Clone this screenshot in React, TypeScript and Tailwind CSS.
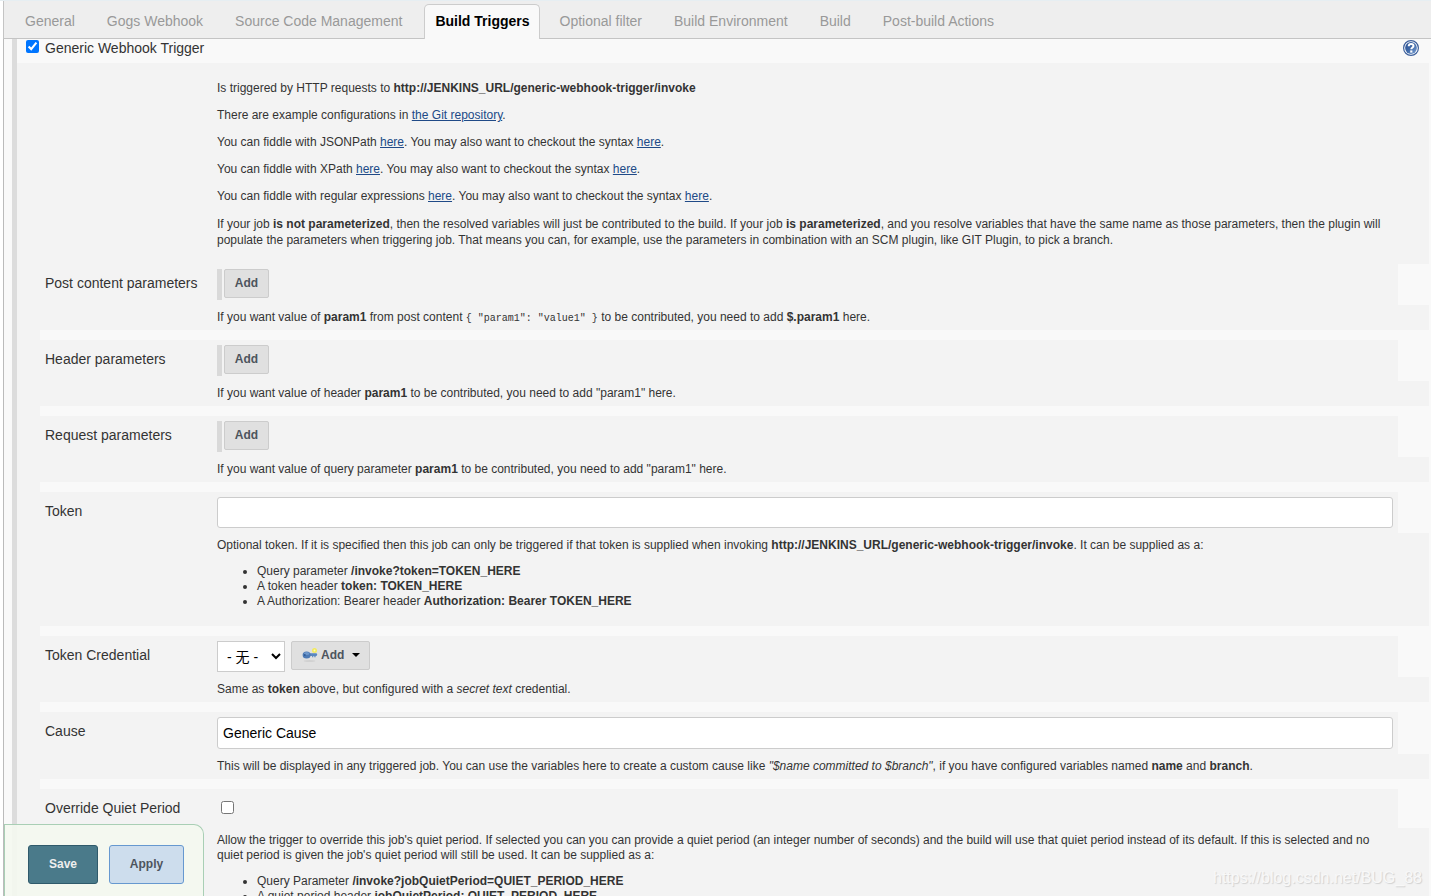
import React from 'react'

const tabs = [
  'General',
  'Gogs Webhook',
  'Source Code Management',
  'Build Triggers',
  'Optional filter',
  'Build Environment',
  'Build',
  'Post-build Actions'
]

const HelpIcon: React.FC = () => (
  <svg width="16" height="16" viewBox="0 0 16 16" aria-hidden="true">
    <defs>
      <linearGradient id="help-fill" x1="0" y1="0" x2="1" y2="1">
        <stop offset="0" stopColor="#2a5092" />
        <stop offset="0.5" stopColor="#3f69a8" />
        <stop offset="1" stopColor="#7ea3d6" />
      </linearGradient>
    </defs>
    <circle cx="8" cy="8" r="7.4" fill="#fff" stroke="#3c5f9b" strokeWidth="1.2" />
    <circle cx="8" cy="8" r="5.9" fill="url(#help-fill)" />
    <path d="M5.7 6.3C5.7 4.7 6.600 3.900 8.100 3.900s2.400.8 2.400 2c0 1.500-2.200 1.600-2.200 3.400" fill="none" stroke="#fff" strokeWidth="2" />
    <rect x="7.200" y="10.400" width="2.200" height="2.200" fill="#fff" />
  </svg>
)

const KeyIcon: React.FC = () => (
  <svg width="16" height="16" viewBox="0 0 16 16" aria-hidden="true">
    <ellipse cx="7.500" cy="14" rx="6" ry="0.8" fill="#cbcbcb" />
    <path d="M7 6.300h7.500l.8 1.200-.8 1.400h-.9v1.300h-1.300V8.900h-1v1.300h-1.200V8.900H7z" fill="#5b87bf" />
    <ellipse cx="4.600" cy="7.900" rx="4" ry="3.500" fill="#4d7ab5" />
    <ellipse cx="4.600" cy="6.500" rx="2.700" ry="1.500" fill="#6f98cb" />
    <circle cx="2.800" cy="8" r="0.9" fill="#2f5791" />
    <circle cx="12.500" cy="3.500" r="2.500" fill="#f3ea5c" />
    <circle cx="12.500" cy="3.500" r="1" fill="#fdf9bb" />
  </svg>
)

interface RowProps {
  label: string
  htmlFor?: string
  control: React.ReactNode
  children: React.ReactNode
}

const Row: React.FC<RowProps> = ({ label, htmlFor, control, children }) => (
  <div className="ml-[23px] border-b-10 border-[#f9f9f9]">
    <div className="flex">
      <div className="flex min-w-0 flex-1 items-start py-[5px] pr-[5px] pl-[5px]">
        <label htmlFor={htmlFor} className="w-[172px] shrink-0 pt-1 text-sm leading-5">
          {label}
        </label>
        {control}
      </div>
      <div className="w-[31px] shrink-0 bg-[#f9f9f9]" />
    </div>
    <div className="pt-[5px] pr-[36px] pb-[5px] pl-[177px] text-xs leading-[15px]">{children}</div>
  </div>
)

const AddButton: React.FC<{ id: string }> = ({ id }) => (
  <div className="flex h-[31px] items-start border-l-5 border-[#d9d9d9] pl-[2px]">
    <button
      id={id}
      type="button"
      className="h-[29px] w-[45px] rounded-xs border border-[#ccc] bg-[#e0e0e0] pb-[2px] text-xs font-bold text-[#4d545d]"
    >
      Add
    </button>
  </div>
)

const DocLink: React.FC<{ children: React.ReactNode }> = ({ children }) => (
  <a href="#" className="text-[#204a87] underline">
    {children}
  </a>
)

export default function App() {
  return (
    <div className="relative flex h-screen flex-col overflow-hidden border-t border-[#e6eef2] bg-white pl-[3px] font-['Liberation_Sans',Arial,'Noto_Sans_CJK_SC',sans-serif] text-[#333]">
      {/* Section tabs */}
      <nav className="flex h-[38px] shrink-0 items-end border-b border-l border-[#c4c4c4] bg-[#eee] pl-[11px]">
        {tabs.map((tab) => (
          <a
            key={tab}
            href="#"
            className={
              tab === 'Build Triggers'
                ? '-mb-px mr-[10px] h-[35px] rounded-t-[5px] border border-b-0 border-[#ccc] bg-[#f9f9f9] pt-[6px] pr-[9px] pl-[10px] text-sm leading-5 font-bold whitespace-nowrap text-black'
                : 'mr-3 h-[34px] px-[10px] pt-[7px] text-sm leading-5 whitespace-nowrap text-[#999]'
            }
          >
            {tab}
          </a>
        ))}
      </nav>

      <main className="min-h-0 flex-1 overflow-hidden border-l border-[#bbb] bg-[#f9f9f9] pl-2">
        <div className="border-l-5 border-[#dcdcdc] pr-[2px]">
          <div className="flex h-6 items-start justify-between pr-[10px] pl-[9px]">
            <div className="flex items-start">
              <input id="webhook" type="checkbox" defaultChecked className="mt-px size-[13px]" />
              <label htmlFor="webhook" className="ml-[6px] text-sm leading-[18px]">
                Generic Webhook Trigger
              </label>
            </div>
            <button type="button" aria-label="Help" className="mt-px">
              <HelpIcon />
            </button>
          </div>

          <div className="bg-[#f3f3f3]">
            {/* Plugin description */}
            <div className="space-y-3 pt-[18px] pr-[36px] pb-4 pl-[200px] text-xs leading-[15px]">
              <p>
                Is triggered by HTTP requests to <b>http://JENKINS_URL/generic-webhook-trigger/invoke</b>
              </p>
              <p>
                There are example configurations in <DocLink>the Git repository</DocLink>.
              </p>
              <p>
                You can fiddle with JSONPath <DocLink>here</DocLink>. You may also want to checkout the syntax <DocLink>here</DocLink>.
              </p>
              <p>
                You can fiddle with XPath <DocLink>here</DocLink>. You may also want to checkout the syntax <DocLink>here</DocLink>.
              </p>
              <p>
                You can fiddle with regular expressions <DocLink>here</DocLink>. You may also want to checkout the syntax <DocLink>here</DocLink>.
              </p>
              <p className="leading-4">
                If your job <b>is not parameterized</b>, then the resolved variables will just be contributed to the build. If your job <b>is parameterized</b>, and you resolve variables that have the same name as those parameters, then the plugin will populate the parameters when triggering job. That means you can, for example, use the parameters in combination with an SCM plugin, like GIT Plugin, to pick a branch.
              </p>
            </div>

            <Row label="Post content parameters" htmlFor="add-post" control={<AddButton id="add-post" />}>
              <p>
                If you want value of <b>param1</b> from post content{' '}
                <code className="font-['Liberation_Mono',monospace] text-[10px] leading-none">{'{ "param1": "value1" }'}</code> to be contributed, you need to add <b>$.param1</b> here.
              </p>
            </Row>

            <Row label="Header parameters" htmlFor="add-header" control={<AddButton id="add-header" />}>
              <p>
                If you want value of header <b>param1</b> to be contributed, you need to add "param1" here.
              </p>
            </Row>

            <Row label="Request parameters" htmlFor="add-request" control={<AddButton id="add-request" />}>
              <p>
                If you want value of query parameter <b>param1</b> to be contributed, you need to add "param1" here.
              </p>
            </Row>

            <Row
              label="Token"
              htmlFor="token"
              control={<input id="token" type="text" className="h-[31px] min-w-0 flex-1 rounded-[3px] border border-[#ccc] bg-white px-[5px] text-sm text-black" />}
            >
              <p>
                Optional token. If it is specified then this job can only be triggered if that token is supplied when invoking <b>http://JENKINS_URL/generic-webhook-trigger/invoke</b>. It can be supplied as a:
              </p>
              <ul className="list-disc pt-[11px] pb-3 pl-10">
                <li>Query parameter <b>/invoke?token=TOKEN_HERE</b></li>
                <li>A token header <b>token: TOKEN_HERE</b></li>
                <li>A Authorization: Bearer header <b>Authorization: Bearer TOKEN_HERE</b></li>
              </ul>
            </Row>

            <Row
              label="Token Credential"
              htmlFor="credential"
              control={
                <div className="flex h-[31px] items-start gap-[6px]">
                  <select id="credential" className="h-[31px] w-[68px] border border-[#ccc] bg-white px-[5px] text-sm text-black">
                    <option>- 无 -</option>
                  </select>
                  <button
                    type="button"
                    className="flex h-[29px] w-[79px] items-center rounded-xs border border-[#ccc] bg-[#e0e0e0] pb-[2px] pl-[10px] text-xs font-bold text-[#4d545d]"
                  >
                    <KeyIcon />
                    <span className="ml-[3px]">Add</span>
                    <svg width="8" height="4" viewBox="0 0 8 4" className="ml-2" aria-hidden="true">
                      <path d="M0 0h8L4 4z" fill="#000" />
                    </svg>
                  </button>
                </div>
              }
            >
              <p>
                Same as <b>token</b> above, but configured with a <i>secret text</i> credential.
              </p>
            </Row>

            <Row
              label="Cause"
              htmlFor="cause"
              control={<input id="cause" type="text" defaultValue="Generic Cause" className="h-8 min-w-0 flex-1 rounded-[3px] border border-[#ccc] bg-white px-[5px] text-sm text-black" />}
            >
              <p>
                This will be displayed in any triggered job. You can use the variables here to create a custom cause like <i>"$name committed to $branch"</i>, if you have configured variables named <b>name</b> and <b>branch</b>.
              </p>
            </Row>

            <Row
              label="Override Quiet Period"
              htmlFor="override"
              control={
                <div className="h-[29px] pt-[7px] pl-1">
                  <input id="override" type="checkbox" className="block size-[13px]" />
                </div>
              }
            >
              <p>
                Allow the trigger to override this job's quiet period. If selected you can you can provide a quiet period (an integer number of seconds) and the build will use that quiet period instead of its default. If this is selected and no quiet period is given the job's quiet period will still be used. It can be supplied as a:
              </p>
              <ul className="list-disc pt-[11px] pb-3 pl-10">
                <li>Query Parameter <b>/invoke?jobQuietPeriod=QUIET_PERIOD_HERE</b></li>
                <li>A quiet period header <b>jobQuietPeriod: QUIET_PERIOD_HERE</b></li>
              </ul>
            </Row>
          </div>
        </div>
      </main>

      {/* Sticky save bar */}
      <div className="absolute bottom-0 left-1 flex h-[72px] w-[200px] gap-[11px] rounded-tr-[10px] border-t border-r border-l border-[#a9cfb5] bg-[#f4f8f0]/90 pt-5 pl-[23px]">
        <button type="button" className="h-[39px] w-[70px] rounded-[3px] border border-[#2f5a6b] bg-[#4a7a8a] pb-[2px] text-xs font-bold text-[#eee]">
          Save
        </button>
        <button type="button" className="h-[39px] w-[75px] rounded-[3px] border border-[#6698d0] bg-[#cddded] pb-[2px] text-xs font-bold text-[#4d545d]">
          Apply
        </button>
      </div>

      <div className="pointer-events-none absolute right-[9px] bottom-2 text-base leading-5 text-[#f8f8f8] [text-shadow:1px_1px_1px_#d0d0d0]">
        https://blog.csdn.net/BUG_88
      </div>
    </div>
  )
}
